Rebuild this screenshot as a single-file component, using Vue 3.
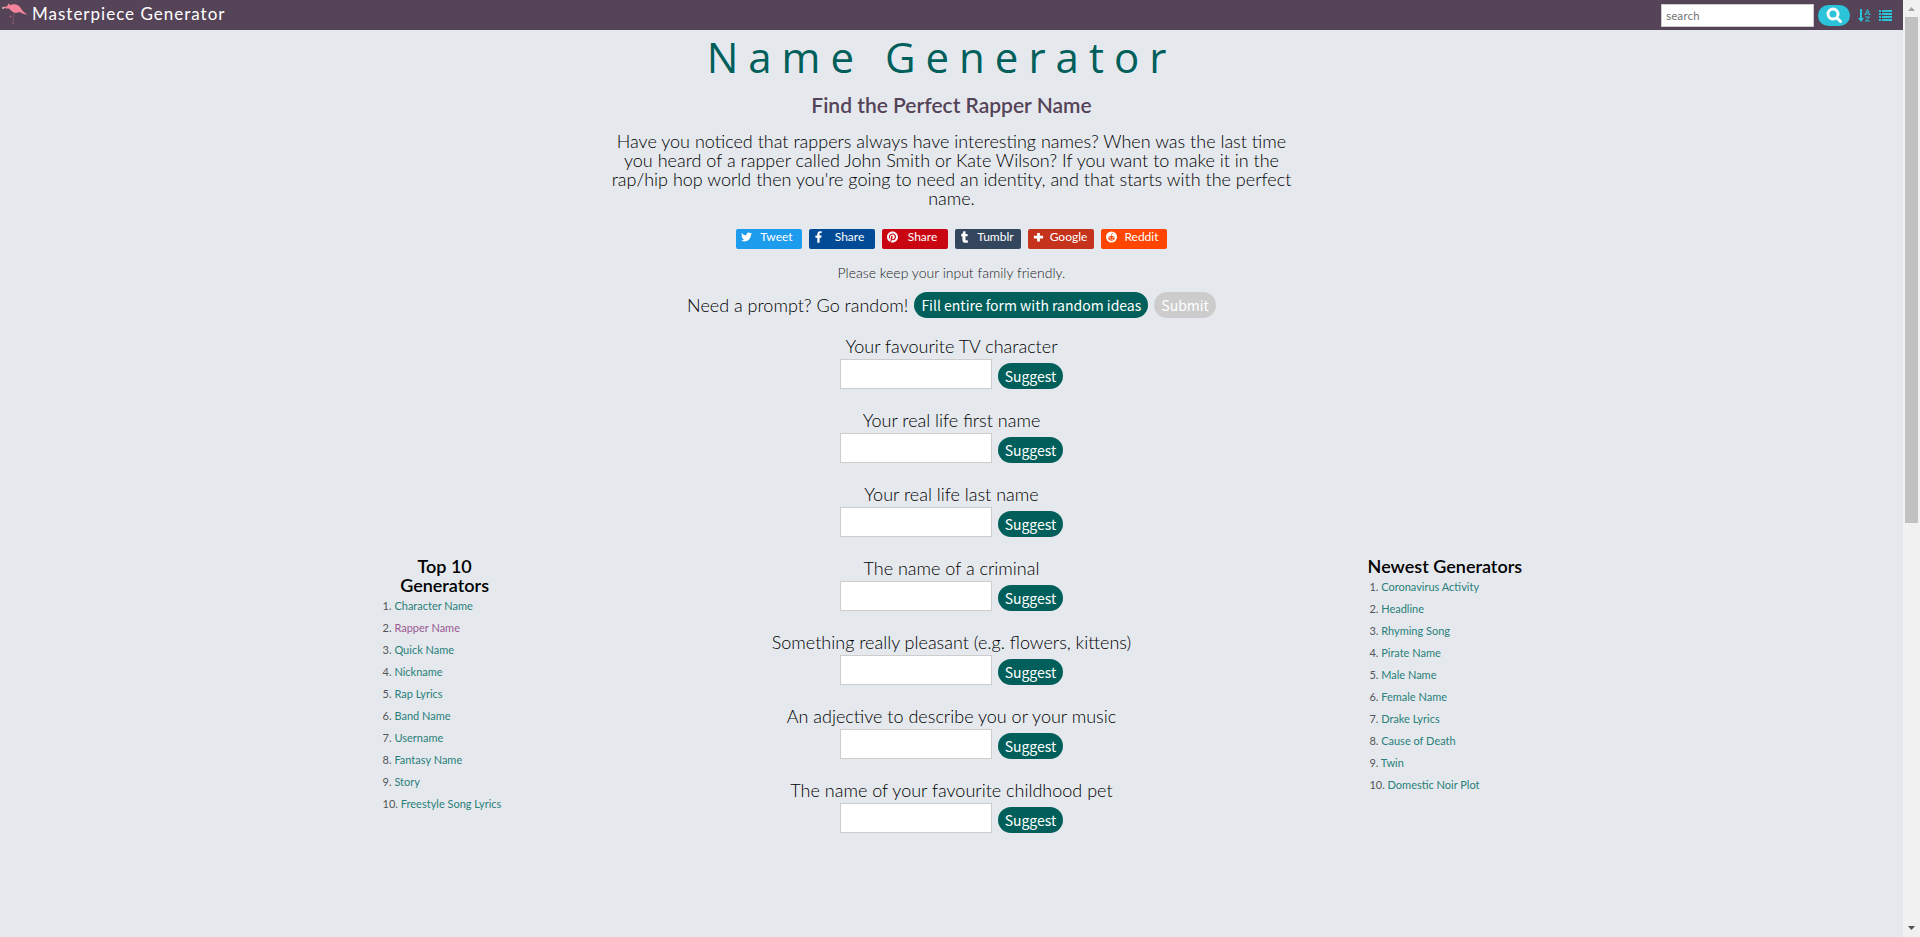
<template>
    <div class="window">
        <div class="page">
            <header class="top-bar">
                <a href="#" class="brand">
                    <svg class="logo" viewBox="0 0 28 24" aria-hidden="true">
                        <path d="M2 6 7 5.500 8.500 2.500 9.500 3 10 4.500C12.500 2.500 17.500 2.500 20 6C22 9 23 11 27.500 13.500C24 13.500 22 12.500 20 11C17 12.500 13 12 10.500 9L9 7.500 6 7.500Z" fill="#f4849b" />
                        <path d="M15 12 13.500 15M13.500 12 13.500 22" stroke="#775066" fill="none" />
                        <circle cx="10.500" cy="15.500" r="1" fill="#b0647b" />
                        <circle cx="13" cy="22" r="1" fill="#8f5a70" />
                        <circle cx="3" cy="7" r="1" fill="#d9c0b8" />
                    </svg>
                    Masterpiece Generator
                </a>
                <form class="search" @submit.prevent>
                    <input v-model="query" type="text" placeholder="search" aria-label="search">
                    <button type="submit" class="search-button" aria-label="Search">
                        <svg viewBox="0 0 16 16" aria-hidden="true">
                            <circle cx="7" cy="7" r="5" fill="none" stroke="#fff" stroke-width="3" />
                            <path d="M11 11 14.500 14.500" stroke="#fff" stroke-width="3" stroke-linecap="round" />
                        </svg>
                    </button>
                    <a href="#" class="nav-icon" aria-label="Sort A to Z">
                        <svg viewBox="0 0 13 13" aria-hidden="true">
                            <path d="M3 0V10" stroke-width="2" />
                            <path d="M0 9h6L3 13Z" fill="#2bc4d8" stroke="none" />
                            <path d="M7.500 5.500 9.500 .5 11.500 5.500M8 4h3M6.500 5.500h2M10.500 5.500h2M7 8h4.500L7.500 12h4.500" />
                        </svg>
                    </a>
                    <a href="#" class="nav-icon" aria-label="All generators">
                        <svg viewBox="0 0 13 13" aria-hidden="true">
                            <path d="M0 2h2M3 2h10M0 5h2M3 5h10M0 8h2M3 8h10M0 11h2M3 11h10" stroke-width="2" />
                        </svg>
                    </a>
                </form>
            </header>

            <div class="columns">
                <aside class="side top-ten">
                    <h3>Top 10 Generators</h3>
                    <ol>
                        <li v-for="(name, i) in topTen" :key="name">
                            {{ i + 1 }}. <a href="#" :class="{ visited: name === 'Rapper Name' }">{{ name }}</a>
                        </li>
                    </ol>
                </aside>

                <main>
                    <h1>Name Generator</h1>
                    <h2>Find the Perfect Rapper Name</h2>
                    <p class="intro">
                        Have you noticed that rappers always have interesting names? When was the last time
                        you heard of a rapper called John Smith or Kate Wilson? If you want to make it in the
                        rap/hip hop world then you're going to need an identity, and that starts with the perfect
                        name.
                    </p>

                    <div class="share">
                        <a v-for="s in networks" :key="s.id" href="#" :class="s.id">
                            <svg :viewBox="s.box" aria-hidden="true"><path :d="s.path" fill-rule="evenodd" /></svg>
                            <span>{{ s.label }}</span>
                        </a>
                    </div>

                    <p class="note">Please keep your input family friendly.</p>

                    <form @submit.prevent>
                        <div class="prompt">
                            <span>Need a prompt? Go random!</span>
                            <button type="button" class="pill">Fill entire form with random ideas</button>
                            <button type="submit" class="pill" disabled>Submit</button>
                        </div>
                        <div v-for="(field, i) in fields" :key="field" class="field">
                            <label :for="'field' + i">{{ field }}</label>
                            <div class="entry">
                                <input :id="'field' + i" v-model="answers[i]" type="text">
                                <button type="button" class="pill">Suggest</button>
                            </div>
                        </div>
                    </form>
                </main>

                <aside class="side">
                    <h3>Newest Generators</h3>
                    <ol>
                        <li v-for="(name, i) in newest" :key="name">
                            {{ i + 1 }}. <a href="#">{{ name }}</a>
                        </li>
                    </ol>
                </aside>
            </div>
        </div>

        <div class="scrollbar" aria-hidden="true">
            <svg class="up" viewBox="0 0 17 17"><path d="M5 11 8.500 7 12 11Z" /></svg>
            <div class="track"><div class="thumb"></div></div>
            <svg class="down" viewBox="0 0 17 17"><path d="M5 6 8.500 10 12 6Z" /></svg>
        </div>
    </div>
</template>

<script setup>
import { ref } from 'vue';

const query = ref('');

const topTen = [
    'Character Name', 'Rapper Name', 'Quick Name', 'Nickname', 'Rap Lyrics',
    'Band Name', 'Username', 'Fantasy Name', 'Story', 'Freestyle Song Lyrics'
];

const newest = [
    'Coronavirus Activity', 'Headline', 'Rhyming Song', 'Pirate Name', 'Male Name',
    'Female Name', 'Drake Lyrics', 'Cause of Death', 'Twin', 'Domestic Noir Plot'
];

const fields = [
    'Your favourite TV character',
    'Your real life first name',
    'Your real life last name',
    'The name of a criminal',
    'Something really pleasant (e.g. flowers, kittens)',
    'An adjective to describe you or your music',
    'The name of your favourite childhood pet'
];
const answers = ref(fields.map(() => ''));

const networks = [
    {
        id: 'twitter',
        label: 'Tweet',
        box: '0 0 512 512',
        path: 'M459.37 151.716c.325 4.548.325 9.097.325 13.645 0 138.72-105.583 298.558-298.558 298.558-59.452 0-114.68-17.219-161.137-47.106 8.447.974 16.568 1.299 25.34 1.299 49.055 0 94.213-16.568 130.274-44.832-46.132-.975-84.792-31.188-98.112-72.772 6.498.974 12.995 1.624 19.818 1.624 9.421 0 18.843-1.3 27.614-3.573-48.081-9.747-84.143-51.98-84.143-102.985v-1.299c13.969 7.797 30.214 12.67 47.431 13.319-28.264-18.843-46.781-51.005-46.781-87.391 0-19.492 5.197-37.36 14.294-52.954 51.655 63.675 129.3 105.258 216.365 109.807-1.624-7.797-2.599-15.918-2.599-24.04 0-57.828 46.782-104.934 104.934-104.934 30.213 0 57.502 12.67 76.67 33.137 23.715-4.548 46.456-13.32 66.599-25.34-7.798 24.366-24.366 44.833-46.132 57.827 21.117-2.273 41.584-8.122 60.426-16.243-14.292 20.791-32.161 39.308-52.628 54.253z'
    },
    {
        id: 'facebook',
        label: 'Share',
        box: '-40 0 480 512',
        path: 'M279.14 288l14.22-92.66h-88.91v-60.13c0-25.35 12.42-50.06 52.24-50.06h40.42V6.26S260.43 0 225.36 0c-73.22 0-121.08 44.38-121.08 124.72v70.62H22.89V288h81.39v224h100.17V288z'
    },
    {
        id: 'pinterest',
        label: 'Share',
        box: '0 0 496 512',
        path: 'M496 256c0 137-111 248-248 248-25.600 0-50.200-3.900-73.400-11.100 10.100-16.500 25.200-43.500 30.800-65 3-11.600 15.400-59 15.400-59 8.100 15.400 31.700 28.500 56.800 28.500 74.800 0 128.700-68.800 128.700-154.300 0-81.900-66.900-143.200-152.900-143.200-107 0-163.900 71.800-163.900 150.100 0 36.400 19.400 81.700 50.300 96.100 4.700 2.200 7.200 1.200 8.300-3.300.8-3.400 5-20.300 6.900-28.100.6-2.500.3-4.700-1.700-7.100-10.100-12.500-18.300-35.300-18.300-56.600 0-54.700 41.400-107.600 112-107.600 60.900 0 103.600 41.500 103.600 100.900 0 67.100-33.900 113.600-78 113.600-24.300 0-42.600-20.100-36.700-44.800 7-29.500 20.500-61.300 20.500-82.600 0-19-10.200-34.900-31.400-34.900-24.900 0-44.900 25.700-44.900 60.200 0 22 7.400 36.800 7.400 36.800s-24.500 103.800-29 123.200c-5 21.400-3 51.600-.9 71.200C65.400 450.900 0 361.100 0 256 0 119 111 8 248 8s248 111 248 248z'
    },
    {
        id: 'tumblr',
        label: 'Tumblr',
        box: '-40 0 480 512',
        path: 'M309.800 480.300c-13.600 14.500-50 31.700-97.400 31.700-120.800 0-147-88.800-147-140.600v-144H17.900c-5.500 0-10-4.500-10-10v-68c0-7.200 4.500-13.600 11.300-16 62-21.800 81.500-76 84.300-117.100.8-11 6.500-16.300 16.100-16.300h70.900c5.500 0 10 4.500 10 10v115.200h83c5.500 0 10 4.400 10 9.900v81.700c0 5.500-4.500 10-10 10h-83.400V360c0 34.200 23.700 53.600 68 35.800 4.800-1.900 9-3.200 12.700-2.200 3.500.9 5.800 3.400 7.400 7.900l22 64.300c1.800 5 3.300 10.600-.4 14.500z'
    },
    {
        id: 'google',
        label: 'Google',
        box: '0 0 12 12',
        path: 'M4.500 1.500h3v3h3.500v3H7.500v3.500h-3V7.500H1v-3h3.500z'
    },
    {
        id: 'reddit',
        label: 'Reddit',
        box: '0 0 24 24',
        path: 'M12 0a12 12 0 1 0 0 24a12 12 0 1 0 0-24M12.500 9C16 9 19 11.500 19 14.500S16 20 12 20s-7-2.500-7-5.500S8 9 11.500 9l1-5 4 1v1l-3-.5zM9 12a1.500 1.500 0 1 0 0 3a1.500 1.500 0 1 0 0-3M15 12a1.500 1.500 0 1 0 0 3a1.500 1.500 0 1 0 0-3M8.500 16.500c2 2 5 2 7 0v1c-2 1.500-5 1.500-7 0z'
    }
];
</script>

<style>
body {
    margin: 0;
    background-color: #e5e9ee;
}
</style>

<style scoped>
.window {
    display: flex;
    height: 100vh;
    font-family: Lato, "Open Sans", sans-serif;
    font-weight: 300;
    font-size: 18px;
    line-height: 19px;
    color: #000;
}

.page {
    flex: 1;
    min-width: 0;
    overflow: hidden;
    background-color: #e5e9ee;
}

a {
    text-decoration: none;
}

input {
    box-sizing: border-box;
    border: 1px solid #ccc;
    background-color: #fff;
    font-family: "Noto Sans CJK SC", sans-serif;
    font-size: 14px;
    outline: none;
}

/* top bar */
.top-bar {
    display: flex;
    align-items: center;
    justify-content: space-between;
    height: 30px;
    padding-right: 11px;
    background-color: #554358;
}

.brand {
    display: flex;
    align-items: center;
    gap: 4px;
    padding-bottom: 4px;
    color: #fff;
    font-size: 17px;
    font-weight: 400;
    letter-spacing: 1px;
}

.logo {
    width: 28px;
    height: 24px;
}

.search {
    display: flex;
    align-items: center;
}

.search input {
    width: 153px;
    height: 23px;
    padding: 0 4px;
    font-size: 11px;
}

.search input::placeholder {
    color: #757575;
}

.search-button {
    display: flex;
    align-items: center;
    justify-content: center;
    width: 32px;
    height: 21px;
    margin: 0 8px 0 4px;
    padding: 0;
    border: 0;
    border-radius: 11px;
    background-color: #2bc4d8;
    cursor: pointer;
}

.search-button svg {
    width: 16px;
    height: 16px;
}

.nav-icon {
    display: flex;
}

.nav-icon + .nav-icon {
    margin-left: 8px;
}

.nav-icon svg {
    width: 13px;
    height: 13px;
    fill: none;
    stroke: #2bc4d8;
}

/* columns */
.columns {
    display: grid;
    grid-template-columns: 155px 690px 155px;
    justify-content: space-between;
    width: 60%;
    margin: 0 auto;
}

.side {
    margin-top: 527px;
    font-size: 11px;
    font-weight: 400;
    color: #555;
}

.side h3 {
    margin: 0;
    color: #000;
    font-size: 18px;
    font-weight: 600;
    text-align: center;
}

.top-ten h3 {
    max-width: 128px;
}

.side ol {
    margin: 0;
    padding: 0 0 0 2px;
    list-style: none;
}

.side li {
    line-height: 22px;
}

.side a {
    color: #2a7f79;
}

.side a.visited {
    color: #9b5a90;
}

main {
    text-align: center;
}

h1 {
    margin: 0;
    padding-right: 20px;
    color: #005f5b;
    font-family: "Open Sans", sans-serif;
    font-size: 42px;
    font-weight: 500;
    line-height: 54px;
    letter-spacing: 10px;
}

h2 {
    margin: 9px 0 15px;
    color: #554358;
    font-size: 21px;
    font-weight: 600;
    line-height: 24px;
}

.intro {
    margin: 0;
}

/* share buttons */
.share {
    display: flex;
    justify-content: center;
    gap: 7px;
    margin-top: 21px;
}

.share a {
    display: flex;
    box-sizing: border-box;
    width: 66px;
    height: 20px;
    padding: 0 5px;
    border-radius: 2px;
    color: #fff;
    font-size: 12px;
    font-weight: 400;
    line-height: 16px;
}

.share svg {
    width: 11px;
    height: 16px;
    fill: #fff;
}

.share span {
    flex: 1;
    padding-left: 4px;
}

.twitter { background-color: #1d9bec; }
.facebook { background-color: #004a96; }
.pinterest { background-color: #c90512; }
.tumblr { background-color: #34465d; }
.google { background-color: #c6331c; }
.reddit { background-color: #ff4500; }

.note {
    margin: 14px 0 10px;
    font-size: 14px;
    color: #222;
}

/* form */
.prompt,
.entry {
    display: flex;
    align-items: center;
    justify-content: center;
    gap: 6px;
}

.prompt {
    margin-bottom: 18px;
}

.pill {
    height: 26px;
    padding: 0 7px;
    border: 0;
    border-radius: 13px;
    background-color: #005f5b;
    color: #fff;
    font-family: "Noto Sans CJK SC", sans-serif;
    font-size: 14px;
    font-weight: 400;
    line-height: 26px;
    cursor: pointer;
}

.pill:disabled {
    background-color: #ccc;
    cursor: default;
}

.field {
    margin-bottom: 21px;
}

.field label {
    display: block;
    padding-bottom: 2px;
    line-height: 21px;
}

.entry {
    align-items: flex-end;
}

.entry input {
    width: 152px;
    height: 30px;
    padding: 0 6px;
}

/* scrollbar */
.scrollbar {
    display: flex;
    flex-direction: column;
    width: 17px;
    background-color: #f1f1f1;
}

.scrollbar svg {
    width: 17px;
    height: 17px;
}

.up { fill: #a3a3a3; }
.down { fill: #505050; }

.track {
    flex: 1;
    padding: 0 2px;
}

.thumb {
    height: 56%;
    background-color: #c1c1c1;
}
</style>
